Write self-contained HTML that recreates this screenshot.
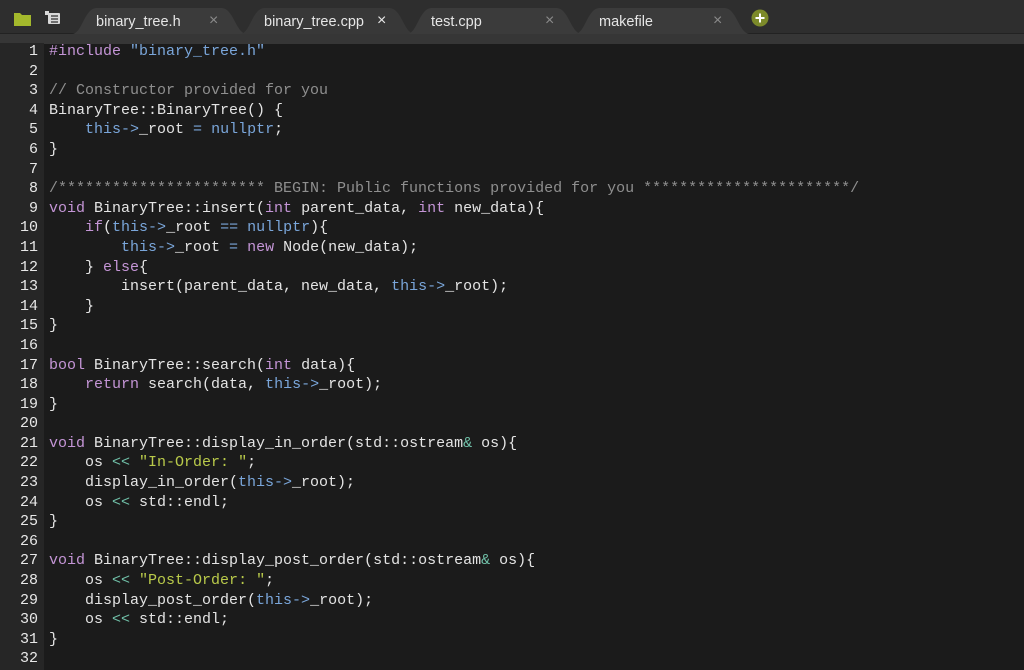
<!DOCTYPE html>
<html><head><style>
body{margin:0;width:1024px;height:670px;background:#1b1b1b;overflow:hidden;font-family:"Liberation Sans",sans-serif}
.bar{position:absolute;left:0;top:0;width:1024px;height:43px;background:#2e2e2e}
.strip{position:absolute;left:0;top:33px;width:1024px;height:10px;background:#363636;border-top:1px solid #222}
.tab{position:absolute;top:7px;height:26px;width:170px;}
.tab svg{position:absolute;left:0;top:0}
.tab span{position:absolute;top:7px;font-size:14.5px;color:#e6e6e6}
.tab i{position:absolute;top:5px;font-style:normal;color:#8a8a8a;font-size:16px}
.gut{position:absolute;left:0;top:43px;width:44px;height:627px;background:#262626}
pre{position:absolute;margin:0;top:42px;font-family:"Liberation Mono",monospace;font-size:15px;line-height:19.6px;color:#e4e4e4}
.ln{left:0;width:38px;text-align:right;color:#e8e8e8}
.code{left:49px}
.k{color:#c495d6}.b{color:#7aa6da}.c{color:#8f8f8f}.s{color:#b9ca4a}.o{color:#70c0a8}
</style></head><body>
<div class="bar"></div>
<div class="strip"></div>
<svg style="position:absolute;left:14px;top:12px" width="18" height="14"><path d="M0 1h6l2 2h9v11H0z" fill="#a3b82c"/></svg>
<svg style="position:absolute;left:45px;top:11px" width="16" height="14"><rect x="3" y="2" width="12" height="11" rx="1" fill="#d8d8d8"/><rect x="0" y="0" width="4" height="4" fill="#d8d8d8"/><path d="M6 5h7M6 8h7M6 11h7" stroke="#2e2e2e" stroke-width="1.2"/></svg>
<div class="tab" style="left:72px"><svg width="175" height="27"><path d="M0 27 C10 27 12 2 24 1 H150 C162 2 164 27 175 27Z" fill="#3b3b3b"/></svg><span style="left:24px">binary_tree.h</span><i style="left:137px">×</i></div>
<div class="tab" style="left:240px"><svg width="175" height="27"><path d="M0 27 C10 27 12 2 24 1 H150 C162 2 164 27 175 27Z" fill="#383838"/></svg><span style="left:24px">binary_tree.cpp</span><i style="left:137px;color:#e6e6e6">×</i></div>
<div class="tab" style="left:407px"><svg width="175" height="27"><path d="M0 27 C10 27 12 2 24 1 H150 C162 2 164 27 175 27Z" fill="#3b3b3b"/></svg><span style="left:24px">test.cpp</span><i style="left:138px">×</i></div>
<div class="tab" style="left:575px"><svg width="175" height="27"><path d="M0 27 C10 27 12 2 24 1 H150 C162 2 164 27 175 27Z" fill="#3b3b3b"/></svg><span style="left:24px">makefile</span><i style="left:138px">×</i></div>
<svg style="position:absolute;left:751px;top:9px" width="18" height="18"><circle cx="9" cy="9" r="8.5" fill="#7c8a2a"/><path d="M9 4.5v9M4.5 9h9" stroke="#fff" stroke-width="2"/></svg>
<div class="gut"></div>
<pre class="ln">1
2
3
4
5
6
7
8
9
10
11
12
13
14
15
16
17
18
19
20
21
22
23
24
25
26
27
28
29
30
31
32</pre>
<pre class="code"><span class="k">#include</span> <span class="b">"binary_tree.h"</span>

<span class="c">// Constructor provided for you</span>
BinaryTree::BinaryTree() {
    <span class="b">this-&gt;</span>_root <span class="b">=</span> <span class="b">nullptr</span>;
}

<span class="c">/*********************** BEGIN: Public functions provided for you ***********************/</span>
<span class="k">void</span> BinaryTree::insert(<span class="k">int</span> parent_data, <span class="k">int</span> new_data){
    <span class="k">if</span>(<span class="b">this-&gt;</span>_root <span class="b">==</span> <span class="b">nullptr</span>){
        <span class="b">this-&gt;</span>_root <span class="b">=</span> <span class="k">new</span> Node(new_data);
    } <span class="k">else</span>{
        insert(parent_data, new_data, <span class="b">this-&gt;</span>_root);
    }
}

<span class="k">bool</span> BinaryTree::search(<span class="k">int</span> data){
    <span class="k">return</span> search(data, <span class="b">this-&gt;</span>_root);
}

<span class="k">void</span> BinaryTree::display_in_order(std::ostream<span class="o">&amp;</span> os){
    os <span class="o">&lt;&lt;</span> <span class="s">"In-Order: "</span>;
    display_in_order(<span class="b">this-&gt;</span>_root);
    os <span class="o">&lt;&lt;</span> std::endl;
}

<span class="k">void</span> BinaryTree::display_post_order(std::ostream<span class="o">&amp;</span> os){
    os <span class="o">&lt;&lt;</span> <span class="s">"Post-Order: "</span>;
    display_post_order(<span class="b">this-&gt;</span>_root);
    os <span class="o">&lt;&lt;</span> std::endl;
}
</pre>
</body></html>
